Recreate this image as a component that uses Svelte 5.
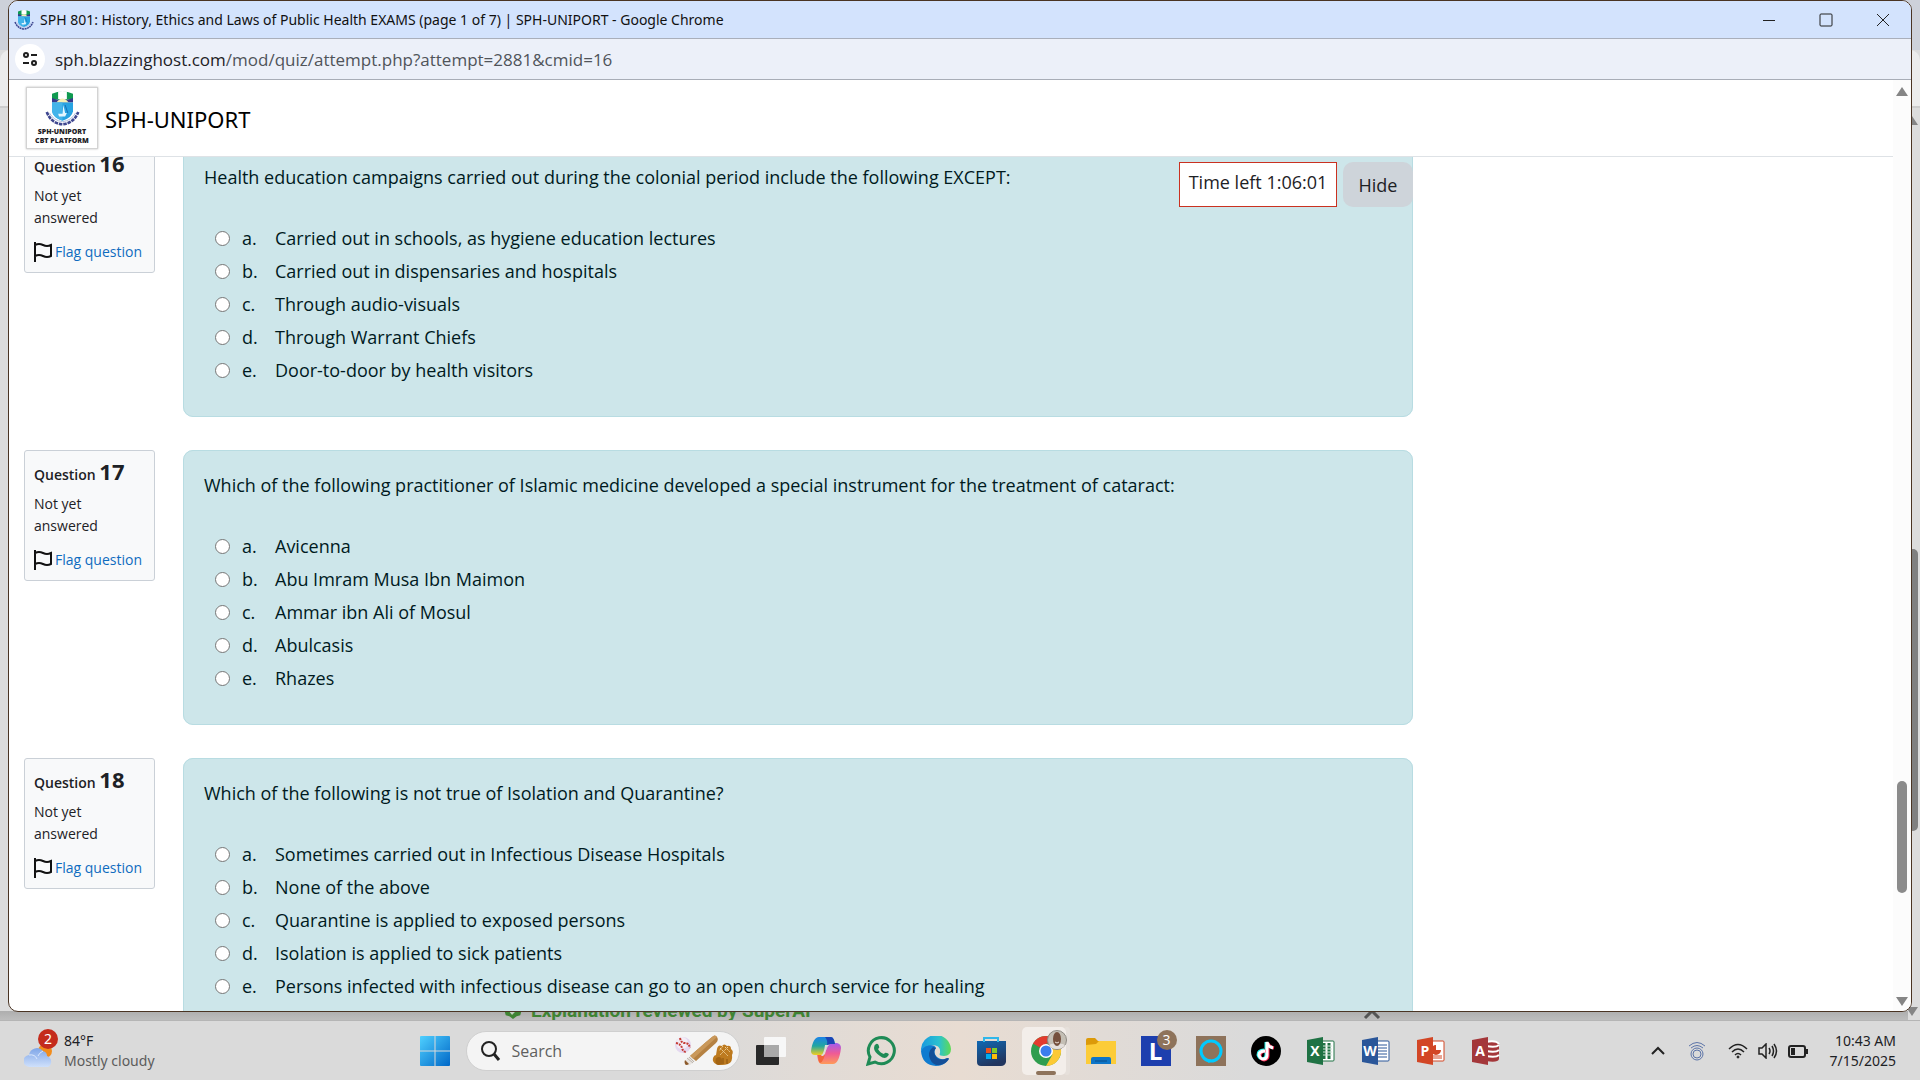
<script>
    let timeLeft = "1:06:01";
    let showTimer = true;
    let address = "sph.blazzinghost.com";
    let path = "/mod/quiz/attempt.php?attempt=2881&cmid=16";
    let search = "";
    const letters = ["a", "b", "c", "d", "e"];

    let questions = [
        {
            id: 16,
            text: "Health education campaigns carried out during the colonial period include the following EXCEPT:",
            answers: [
                "Carried out in schools, as hygiene education lectures",
                "Carried out in dispensaries and hospitals",
                "Through audio-visuals",
                "Through Warrant Chiefs",
                "Door-to-door by health visitors"
            ],
            picked: null
        },
        {
            id: 17,
            text: "Which of the following practitioner of Islamic medicine developed a special instrument for the treatment of cataract:",
            answers: ["Avicenna", "Abu Imram Musa Ibn Maimon", "Ammar ibn Ali of Mosul", "Abulcasis", "Rhazes"],
            picked: null
        },
        {
            id: 18,
            text: "Which of the following is not true of Isolation and Quarantine?",
            answers: [
                "Sometimes carried out in Infectious Disease Hospitals",
                "None of the above",
                "Quarantine is applied to exposed persons",
                "Isolation is applied to sick patients",
                "Persons infected with infectious disease can go to an open church service for healing"
            ],
            picked: null
        }
    ];

    const officeApps = [
        { name: "Excel", letter: "X", color: "#1f7244" },
        { name: "Word", letter: "W", color: "#2a5699" },
        { name: "PowerPoint", letter: "P", color: "#d24625" },
        { name: "Access", letter: "A", color: "#a4373a" }
    ];
</script>

{#snippet crest()}
    <svg class="crest" viewBox="0 0 40 40" aria-hidden="true">
        <path d="M8 3Q20-2 32 3V10H8Z" fill="#0f9a50" />
        <path d="M15 0.500Q20-0.500 25 0.500V9H15Z" fill="#fff" />
        <path d="M8 8L14 10H26L32 8V13H8Z" fill="#37398c" />
        <path d="M13 13Q20 4 27 13Z" fill="#f5efb4" />
        <path d="M8 13H32V23Q31 30 20 34Q9 30 8 23Z" fill="#27a3e2" />
        <path d="M8 13H20V34Q9 30 8 23Z" fill="#43b4ea" />
        <path d="M21 16L23 25H25L23 29H16L15 26H20Z" fill="#e2f6ff" />
        <path d="M23 16L26 25" fill="none" stroke="#1268b0" stroke-width="1" />
        <path d="M2 24Q7 37 20 38Q33 37 38 24" fill="none" stroke="#3f4790" stroke-width="3" stroke-dasharray="4 1" />
        <path d="M5 25Q10 34 20 35Q30 34 35 25" fill="none" stroke="#9fb3d8" stroke-width="1" />
    </svg>
{/snippet}

<div id="desktop">
    <div id="behind">
        <div class="behind-tabs"></div>
        <div class="behind-bar"></div>
        <div class="behind-page">
            <i class="arrow up"></i>
            <div class="behind-thumb"></div>
            <i class="arrow down"></i>
        </div>
        <div class="behind-foot">
            <div class="review">
                <svg width="20" height="22" viewBox="0 0 22 22" aria-hidden="true">
                    <path d="M11 0L14 2L18 2L19 6L22 10L20 14L19 18L15 19L11 22L7 19L3 18L2 14L0 10L3 6L4 2L8 2Z" fill="#3f8434" />
                    <path d="M6 11L10 16L16 10" fill="none" stroke="#c4cfc1" stroke-width="2" />
                </svg>
                <span>Explanation reviewed by SuperAI</span>
            </div>
            <svg class="fold" width="18" height="10" viewBox="0 0 18 10" aria-hidden="true"><path d="M2 8L9 1L16 8" fill="none" stroke="#555" stroke-width="3" /></svg>
        </div>
    </div>

    <div id="window">
        <header id="titlebar">
            <span class="favicon">{@render crest()}</span>
            <span class="title">SPH 801: History, Ethics and Laws of Public Health EXAMS (page 1 of 7) | SPH-UNIPORT - Google Chrome</span>
            <button aria-label="Minimize"><svg width="14" height="14" viewBox="0 0 14 14"><path d="M1 7.5H13" /></svg></button>
            <button aria-label="Maximize"><svg width="14" height="14" viewBox="0 0 14 14"><rect x="1" y="1" width="12" height="12" rx="1" /></svg></button>
            <button aria-label="Close"><svg width="14" height="14" viewBox="0 0 14 14"><path d="M1 1L13 13M13 1L1 13" /></svg></button>
        </header>

        <div id="address">
            <button class="site-info" aria-label="View site information">
                <svg width="18" height="18" viewBox="0 0 18 18" fill="none" stroke="#1f1f1f" stroke-width="2">
                    <circle cx="5" cy="5" r="2" /><path d="M10 5H16M2 13H8" /><circle cx="13" cy="13" r="2" />
                </svg>
            </button>
            <p>{address}<span>{path}</span></p>
        </div>

        <div id="view">
            <div id="page">
                <nav>
                    <a href="#home" class="logo">
                        {@render crest()}
                        <b>SPH-UNIPORT</b>
                        <b>CBT PLATFORM</b>
                    </a>
                    <a href="#home" class="brand">SPH-UNIPORT</a>
                </nav>

                <main>
                    <div class="timer">
                        {#if showTimer}
                            <div class="time">Time left {timeLeft}</div>
                        {/if}
                        <button on:click={() => (showTimer = !showTimer)}>{showTimer ? "Hide" : "Show"}</button>
                    </div>

                    {#each questions as q (q.id)}
                        <section class="question">
                            <div class="info">
                                <h3>Question <span>{q.id}</span></h3>
                                <p>Not yet answered</p>
                                <a href="#flag">
                                    <svg width="18" height="20" viewBox="0 0 18 20" aria-hidden="true"><path d="M1 0V20M1 3Q5 1 9 3T17 3V14Q13 16 9 14T1 14" /></svg>Flag question
                                </a>
                            </div>
                            <fieldset class="content">
                                <legend>{q.text}</legend>
                                {#each q.answers as answer, i}
                                    <label>
                                        <input type="radio" name="q{q.id}" value={i} bind:group={q.picked}>
                                        <span class="letter">{letters[i]}.</span>
                                        <span>{answer}</span>
                                    </label>
                                {/each}
                            </fieldset>
                        </section>
                    {/each}
                </main>
            </div>
            <div id="scrollbar">
                <i class="arrow up"></i>
                <div class="thumb"></div>
                <i class="arrow down"></i>
            </div>
        </div>
    </div>

    <footer id="taskbar">
        <button class="weather">
            <span class="weather-icon">
                <svg width="32" height="26" viewBox="0 0 32 26" aria-hidden="true">
                    <defs><linearGradient id="cloud" x2="0" y2="1"><stop offset="0" stop-color="#7fa6e8" /><stop offset="1" stop-color="#cfe0fb" /></linearGradient></defs>
                    <circle cx="21" cy="8" r="7" fill="#f28c1c" />
                    <path d="M6 24A6 6 0 0 1 5 12A8 8 0 0 1 19 8Q23 9 23 13A6 6 0 0 1 24 24Z" fill="url(#cloud)" />
                    <path d="M5 12Q11 11 13 16M19 8Q15 10 14 13" fill="none" stroke="#dbe8fd" stroke-width="1" />
                </svg>
                <b>2</b>
            </span>
            <span class="weather-text">84°F<small>Mostly cloudy</small></span>
        </button>

        <div class="apps">
            <button aria-label="Start">
                <svg width="30" height="30" viewBox="0 0 30 30">
                    <defs><linearGradient id="win" x2="1" y2="1"><stop offset="0" stop-color="#4fd0ff" /><stop offset="1" stop-color="#0067c7" /></linearGradient></defs>
                    <path d="M1 0H14.500V14.500H0V1Q0 0 1 0ZM15.500 0H29Q30 0 30 1V14.500H15.500ZM0 15.500H14.500V30H1Q0 30 0 29ZM15.500 15.500H30V29Q30 30 29 30H15.500Z" fill="url(#win)" />
                </svg>
            </button>
            <label class="search">
                <svg width="20" height="20" viewBox="0 0 20 20" fill="none" stroke="#222" stroke-width="2"><circle cx="8" cy="8" r="7" /><path d="M13 13L18 19" stroke-width="3" /></svg>
                <input type="text" placeholder="Search" aria-label="Search" bind:value={search}>
                <svg width="60" height="32" viewBox="0 0 60 32" aria-hidden="true">
                    <circle cx="9" cy="10" r="8" fill="#e4d8f0" />
                    <circle cx="8" cy="8" r="6" fill="#f3ecf4" />
                    <path d="M6 3Q7 8 11 8T16 13M2 8Q7 9 8 13T12 17" fill="none" stroke="#c43b34" stroke-width="2" stroke-dasharray="2 1" />
                    <path d="M38 2Q41-1 43 2Q45 5 42 8L22 26L16 21L32 7Z" fill="#b58142" />
                    <path d="M38 2Q41-1 43 2L19 24L16 21L32 7Z" fill="#c9985a" />
                    <path d="M11 26L16 21L21 26L16 30Q11 31 11 26Z" fill="#e8e4e0" />
                    <path d="M13 23L19 28M15 22L20 27" stroke="#bcb5ad" stroke-width="1" />
                    <path d="M11 25L15 29Q12 31 11 29Q10 27 11 25Z" fill="#8c5a2b" />
                    <path d="M43 14Q44 9 48 11Q50 8 53 11Q57 10 57 14Q60 16 58 20Q59 27 54 29Q48 31 42 29Q38 27 39 23Q40 20 42 20Z" fill="#bd7a1f" />
                    <path d="M46 13L54 21M51 12L56 17M54 12L46 20M49 11L45 16" stroke="#f0d19b" stroke-width="1" stroke-dasharray="2 1" />
                    <path d="M42 29Q40 22 45 22Q49 22 48 29Q44 31 42 29Z" fill="#a36413" />
                    <path d="M49 29V23M53 29V24" fill="none" stroke="#8b540f" stroke-width="1" />
                </svg>
            </label>
            <button aria-label="Task View">
                <svg width="30" height="30" viewBox="0 0 30 30">
                    <rect x="0" y="9" width="23" height="20" rx="1" fill="#292929" />
                    <rect x="8" y="1" width="22" height="20" rx="1" fill="#f7f7f7" />
                    <rect x="8" y="9" width="15" height="12" fill="#a9a9a9" />
                </svg>
            </button>
            <button aria-label="Copilot">
                <svg width="30" height="30" viewBox="0 0 30 30">
                    <defs>
                        <linearGradient id="cop1" x2="0" y2="1"><stop offset="0" stop-color="#1c83e8" /><stop offset="0.500" stop-color="#22a6a0" /><stop offset="1" stop-color="#f2cf1f" /></linearGradient>
                        <linearGradient id="cop2" x2="0" y2="1"><stop offset="0" stop-color="#a05cf0" /><stop offset="0.500" stop-color="#ef5b95" /><stop offset="1" stop-color="#ff9a58" /></linearGradient>
                    </defs>
                    <path d="M22 28H11Q8 28 7 24L6 19H11Q13 19 14 16L17 10Q18 7 21 7H26Q30 8 30 12Q28 28 22 28Z" fill="url(#cop2)" />
                    <path d="M7 19H11Q13 19 14 16L15 13Q13 26 9 27Q7 25 7 19Z" fill="#f2673c" />
                    <path d="M8 1H20Q22 1 23 4L24 8H19Q17 8 16 11L13 17Q12 19 9 19H4Q0 19 0 15Q2 1 8 1Z" fill="url(#cop1)" />
                    <path d="M14 1H20Q22 1 23 4L24 8H19Q17 8 16 10Q17 4 14 1Z" fill="#1b45b5" />
                    <path d="M14 9H18L16 11L14 18L12 20H10Q13 17 14 9Z" fill="#dedbda" />
                </svg>
            </button>
            <button aria-label="WhatsApp">
                <svg width="30" height="30" viewBox="0 0 30 30">
                    <path d="M2 28L4 21A13 13 0 1 1 9 26Z" fill="none" stroke="#1f8b56" stroke-width="3" />
                    <path d="M10 8Q12 7 13 10Q14 12 12 13Q14 17 18 18Q19 16 21 17Q24 18 22 20Q19 24 14 20Q8 16 8 12Q8 9 10 8Z" fill="#1f8b56" />
                </svg>
            </button>
            <button aria-label="Edge">
                <svg width="30" height="30" viewBox="0 0 30 30">
                    <defs>
                        <linearGradient id="edge1"><stop offset="0" stop-color="#1798e0" /><stop offset="0.600" stop-color="#2bc2cf" /><stop offset="1" stop-color="#5fdb52" /></linearGradient>
                    </defs>
                    <path d="M0 15Q1 8 9 9Q14 9 15 12Q12 16 15 20Q19 25 28 22Q24 30 15 30Q1 29 0 15Z" fill="#0f7bd0" />
                    <path d="M0 15A15 15 0 0 1 30 13Q30 20 23 20Q17 20 19 17Q20 9 11 9Q3 9 0 15Z" fill="url(#edge1)" />
                    <path d="M12 11Q6 16 9 23Q12 30 19 29Q25 28 28 23Q27 21 24 23Q17 25 14 19Q12 15 15 12Z" fill="#144f98" />
                </svg>
            </button>
            <button aria-label="Microsoft Store">
                <svg width="30" height="30" viewBox="0 0 30 30">
                    <defs><linearGradient id="store" x2="0.400" y2="1"><stop offset="0" stop-color="#0f68b3" /><stop offset="1" stop-color="#22365f" /></linearGradient></defs>
                    <path d="M1 5H30V26Q29 30 25 30H5Q1 30 1 26Z" fill="url(#store)" />
                    <path d="M8 6V2H22V6" fill="none" stroke="#30b7ea" stroke-width="2" />
                    <path d="M10 12H15V17H10Z" fill="#f1511b" /><path d="M16 12H21V17H16Z" fill="#80cc28" />
                    <path d="M10 18H15V23H10Z" fill="#00adef" /><path d="M16 18H21V23H16Z" fill="#fbbc09" />
                </svg>
            </button>
            <button class="active" aria-label="Google Chrome">
                <svg width="48" height="48" viewBox="0 0 48 48">
                    <rect x="42" y="0" width="6" height="48" rx="4" fill="#e6e0db" />
                    <rect x="0" y="0" width="44" height="48" rx="5" fill="#f3eeea" />
                    <circle cx="24" cy="24" r="15" fill="#2f9d4e" />
                    <path d="M24 24L11 16.500A15 15 0 0 1 37 16.500H24Z" fill="#e33b2e" />
                    <path d="M24 24L30.500 16.500H37A15 15 0 0 1 24 39L30.500 27.500Z" fill="#fcc934" />
                    <circle cx="24" cy="24" r="7" fill="#fff" /><circle cx="24" cy="24" r="5.500" fill="#3b7ded" />
                    <circle cx="35" cy="13" r="9.500" fill="#c4bfb5" stroke="#8e8a84" />
                    <path d="M27 18Q30 16 35 17Q40 16 43 18Q41 22 35 22Q29 22 27 18Z" fill="#e4dfdb" />
                    <ellipse cx="35" cy="12" rx="4" ry="7" fill="#75503d" /><path d="M33 15Q35 17 37 15" fill="none" stroke="#ece2da" />
                    <rect x="14" y="44" width="20" height="4" rx="2" fill="#8e735b" />
                </svg>
            </button>
            <button aria-label="File Explorer">
                <svg width="30" height="30" viewBox="0 0 30 30">
                    <path d="M0 4Q0 2 2 2H9L12 5H28V12H0Z" fill="#dc9a09" />
                    <path d="M0 9L10 8L13 5H30V28H0Z" fill="#fccc38" />
                    <path d="M5 28V23Q5 21 7 21H23Q25 21 25 23V28Z" fill="#0d75c8" /><path d="M9 25H21" stroke="#0a4c88" stroke-width="1" />
                </svg>
            </button>
            <button class="square blue" aria-label="L, 3 notifications"><strong>L</strong><span class="badge">3</span></button>
            <button class="square brown" aria-label="Alexa">
                <svg width="24" height="24" viewBox="0 0 24 24"><circle cx="12" cy="12" r="10" fill="none" stroke="#00caff" stroke-width="3" /><path d="M11 20L9 24L14 22Z" fill="#00caff" /></svg>
            </button>
            <button aria-label="TikTok">
                <svg width="30" height="30" viewBox="0 0 30 30">
                    <circle cx="15" cy="15" r="15" fill="#000" />
                    <g fill="none" stroke-width="3">
                        <path d="M13 14Q7 14 7 19Q8 23 12 23Q15 22 15 19V6Q16 10 21 11" stroke="#25f4ee" />
                        <path d="M15 15Q9 15 9 20Q10 24 13 24Q17 23 17 20V7Q18 11 23 12" stroke="#fe2c55" />
                        <path d="M14 15Q8 15 8 19Q9 23 12 23Q16 23 16 19V6Q17 11 22 12" stroke="#fff" />
                    </g>
                </svg>
            </button>
            {#each officeApps as app}
                <button aria-label={app.name}>
                    <svg width="30" height="28" viewBox="0 0 30 28">
                        {#if app.name === "Access"}
                            <path d="M15 5Q27 2 28 7V22Q27 26 15 24Z" fill={app.color} />
                            <path d="M15 9Q25 11 28 8M15 14Q25 16 28 13M15 19Q25 21 28 18M15 5Q25 3 28 7" fill="none" stroke="#fff" stroke-width="2" />
                        {:else}
                            <rect x="15" y="4" width="13" height="20" rx="1" fill="#fff" stroke={app.color} />
                        {/if}
                        {#if app.name === "Excel"}
                            <path d="M18 6V22M23 6V22" stroke={app.color} stroke-width="3" /><path d="M17 9H26M17 12H26M17 15H26M17 18H26" stroke="#d4e5da" />
                        {:else if app.name === "Word"}
                            <path d="M17 8H26M17 11H26M17 14H26M17 17H26M17 20H26" stroke={app.color} />
                        {:else if app.name === "PowerPoint"}
                            <path d="M20 8V13H25A5 5 0 1 1 20 8Z" fill={app.color} /><path d="M17 19H26M17 21H26" stroke={app.color} />
                        {/if}
                        <path d="M1 3L17 0V28L1 25Z" fill={app.color} />
                        <text x="9" y="19" text-anchor="middle">{app.letter}</text>
                    </svg>
                </button>
            {/each}
        </div>

        <div class="tray">
            <button aria-label="Show hidden icons"><svg width="16" height="16" viewBox="0 0 16 16"><path d="M2 11L8 5L14 11" stroke-width="2" /></svg></button>
            <button aria-label="Hotspot"><svg width="18" height="20" viewBox="0 0 18 20" class="pale"><circle cx="9" cy="13" r="6" /><circle cx="9" cy="13" r="4" /><path d="M1 5Q9-2 17 5M3 7Q9 2 15 7" /></svg></button>
            <button class="status" aria-label="Network, volume and battery">
                <svg width="20" height="16" viewBox="0 0 20 16"><path d="M1 6Q10-3 19 6M4 9Q10 3 16 9M7 12Q10 9 13 12" stroke-width="1.500" /><circle cx="10" cy="14" r="1" fill="#222" /></svg>
                <svg width="20" height="16" viewBox="0 0 20 16"><path d="M1 5H4L8 1V15L4 11H1ZM11 5Q13 8 11 11M14 3Q17 8 14 13M16 1Q21 8 16 15" stroke-width="1.500" /></svg>
                <svg width="20" height="16" viewBox="0 0 20 16"><rect x="1" y="3" width="16" height="11" rx="2" stroke-width="2" /><rect x="3" y="5" width="4" height="7" fill="#222" stroke="none" /><path d="M19 6V11" stroke-width="2" /></svg>
            </button>
            <button class="clock"><span>10:43 AM</span><span>7/15/2025</span></button>
        </div>
    </footer>
</div>

<style>
:global(body){
    overflow: hidden;
}
#desktop{
    position: relative;
    display: flex;
    flex-direction: column;
    height: 100vh;
    box-sizing: border-box;
    font-family: "Open Sans", "Noto Sans", sans-serif;
    color: #1d2125;
    background: #dcdcdc;
}
button{
    border: 0;
    padding: 0;
    background: none;
    font: inherit;
    color: inherit;
}
a{
    text-decoration: none;
    color: inherit;
}
svg{
    display: block;
    flex: none;
}

/* the browser window under the popup */
#behind{
    position: absolute;
    inset: 0 0 60px 0;
    display: flex;
    flex-direction: column;
    background: #dcdcdc;
}
.behind-tabs{
    height: 50px;
    background: #cdd1da;
}
.behind-bar{
    height: 56px;
    border-bottom: 2px solid #cdcdcd;
    background: #ececec;
    border-radius: 10px 10px 0 0;
}
.behind-page{
    flex: 1;
    display: flex;
    flex-direction: column;
    align-items: flex-end;
    padding: 8px 2px 4px 0;
}
.behind-thumb{
    width: 10px;
    height: 282px;
    margin-top: 424px;
    margin-bottom: auto;
    border-radius: 5px;
    background: #808080;
}
.behind-foot{
    position: absolute;
    left: 0;
    right: 12px;
    bottom: 0;
    height: 9px;
    overflow: hidden;
    display: flex;
    align-items: flex-end;
    background: linear-gradient(#aeaeae, #bdbdbd);
}
.review{
    display: flex;
    align-items: flex-end;
    gap: 8px;
    margin-left: 503px;
    font: 700 19px/18px Roboto, sans-serif;
    color: #3f8434;
}
.fold{
    margin-left: 552px;
}

#window{
    position: relative;
    flex: 1;
    min-height: 0;
    margin: 0 8px 8px 8px;
    display: flex;
    flex-direction: column;
    overflow: hidden;
    border: 1px solid #4a3423;
    border-radius: 10px;
    background: #fff;
}
#titlebar{
    display: flex;
    align-items: center;
    height: 37px;
    padding-left: 5px;
    border-bottom: 1px solid #a9afbb;
    background: #d3e3fd;
    color: #111;
    font-family: "Noto Sans", sans-serif;
    font-size: 14px;
}
.favicon{
    width: 20px;
    margin-right: 6px;
}
.title{
    flex: 1;
}
#titlebar button{
    width: 57px;
    display: flex;
    justify-content: center;
}
#titlebar button svg{
    fill: none;
    stroke: #222;
}
#address{
    display: flex;
    align-items: center;
    gap: 10px;
    height: 40px;
    padding-left: 6px;
    border-bottom: 1px solid #a8adb7;
    background: #ecf0f9;
    font-size: 17px;
}
#address p{
    margin: 0;
}
#address p span{
    color: #50545a;
}
.site-info{
    display: flex;
    align-items: center;
    justify-content: center;
    width: 30px;
    height: 30px;
    border-radius: 50%;
    background: #fff;
}

#view{
    flex: 1;
    min-height: 0;
    display: flex;
}
#page{
    flex: 1;
    min-width: 0;
    display: flex;
    flex-direction: column;
    overflow: hidden;
}
nav{
    display: flex;
    align-items: center;
    gap: 7px;
    flex: none;
    height: 76px;
    padding-left: 17px;
    border-bottom: 1px solid #dee2e6;
    background: #fff;
}
.logo{
    display: flex;
    flex-direction: column;
    align-items: center;
    width: 70px;
    height: 60px;
    border: 1px solid #d3d3d3;
    box-shadow: 0 0 2px #bbb;
    font: 700 7px/9px "Open Sans", sans-serif;
}
.logo .crest{
    width: 35px;
    margin-top: 3px;
    margin-bottom: 1px;
}
.brand{
    padding-top: 2px;
    font-family: "Noto Sans", sans-serif;
    font-size: 22px;
    color: #000;
}

main{
    position: relative;
    flex: 1;
    min-height: 0;
    overflow: hidden;
    padding: 0 480px 0 15px;
}
.timer{
    position: absolute;
    top: 5px;
    right: 480px;
    display: flex;
    gap: 6px;
    font-size: 18px;
}
.time{
    box-sizing: border-box;
    width: 158px;
    height: 45px;
    border: 1px solid #ca3120;
    background: #fff;
    text-align: center;
    line-height: 39px;
}
.timer button{
    width: 70px;
    height: 45px;
    border-radius: 10px;
    background: #ced4da;
    color: #1d2125;
}
.question{
    display: flex;
    gap: 28px;
    margin-bottom: 33px;
}
.question:nth-of-type(1){
    margin-top: -15px;
}
.info{
    flex: none;
    align-self: flex-start;
    box-sizing: border-box;
    width: 131px;
    height: 131px;
    padding: 6px 9px;
    border: 1px solid #cad0d7;
    border-radius: 3px;
    background: #f8f9fa;
    font-size: 14px;
    line-height: 22px;
}
.info h3{
    margin: 0 0 4px 0;
    font-size: 14px;
    font-weight: 600;
    line-height: 28px;
}
.info h3 span{
    font-size: 22px;
    font-weight: 700;
}
.info p{
    margin: 0 0 12px 0;
    width: 80px;
}
.info a{
    display: flex;
    align-items: center;
    gap: 3px;
    color: #0f6cbf;
    white-space: nowrap;
}
.info a svg{
    fill: none;
    stroke: #111;
    stroke-width: 2;
}
.content{
    flex: 1;
    min-width: 0;
    box-sizing: border-box;
    height: 275px;
    margin: 0;
    padding: 20px;
    border: 1px solid #b8dce2;
    border-radius: 10px;
    background: #cde6ea;
    color: #001a1e;
    font-size: 18px;
    line-height: 28px;
}
.content legend{
    float: left;
    width: 100%;
    padding: 0;
    margin-bottom: 33px;
}
.content label{
    clear: both;
    display: flex;
    align-items: center;
    height: 28px;
    margin-bottom: 5px;
}
.content input{
    appearance: none;
    box-sizing: border-box;
    width: 15px;
    height: 15px;
    margin: 0 12px 0 11px;
    border: 1px solid #767676;
    border-radius: 50%;
    background: #fff;
}
.content input:checked{
    border: 5px solid #0f6cbf;
}
.letter{
    width: 33px;
}

#scrollbar{
    display: flex;
    flex-direction: column;
    align-items: center;
    width: 18px;
    padding: 7px 0 5px 0;
    box-sizing: border-box;
    background: #fcfcfc;
}
.arrow{
    border: 6px solid transparent;
}
.arrow.up{
    border-top: 0;
    border-bottom: 9px solid #858585;
}
.arrow.down{
    border-bottom: 0;
    border-top: 9px solid #858585;
}
#scrollbar .thumb{
    width: 10px;
    height: 112px;
    margin-top: 685px;
    margin-bottom: auto;
    border-radius: 5px;
    background: #8b8b8b;
}

#taskbar{
    position: relative;
    display: grid;
    grid-template-columns: 1fr auto 1fr;
    align-items: center;
    height: 60px;
    box-sizing: border-box;
    border-top: 1px solid #b5b5b5;
    background: linear-gradient(90deg, #dadada 35%, #e8dcd2 50%, #dadada 65%);
}
.weather{
    justify-self: start;
    display: flex;
    gap: 8px;
    margin-left: 24px;
    text-align: left;
    font: 14px/20px "Noto Sans", sans-serif;
}
.weather-icon{
    position: relative;
    padding-top: 12px;
}
.weather-icon b{
    position: absolute;
    top: -2px;
    left: 14px;
    width: 20px;
    height: 20px;
    border-radius: 50%;
    background: #c42b1c;
    color: #fff;
    text-align: center;
    font-weight: 400;
}
.weather-text small{
    display: block;
    font-size: 14px;
    color: #5c5c5c;
}
.apps{
    display: flex;
    align-items: center;
    gap: 7px;
}
.apps button{
    width: 48px;
    height: 48px;
    display: flex;
    align-items: center;
    justify-content: center;
}
.search{
    display: flex;
    align-items: center;
    box-sizing: border-box;
    width: 274px;
    height: 40px;
    padding: 0 5px 0 14px;
    border: 1px solid #cfcfcf;
    border-radius: 20px;
    background: #f4f4f4;
}
.search input{
    flex: 1;
    min-width: 0;
    border: 0;
    padding: 0 0 0 11px;
    background: none;
    font: 16px "Open Sans", sans-serif;
}
.search input::placeholder{
    color: #5f5f5f;
}
.apps .square{
    position: relative;
    width: 30px;
    height: 30px;
    margin: 0 9px;
}
.blue{
    background: #1d3fae;
    color: #fff;
}
.blue strong{
    font-size: 24px;
}
.brown{
    background: #8e735b;
}
.badge{
    position: absolute;
    top: -6px;
    right: -6px;
    width: 20px;
    border-radius: 50%;
    background: #8e735b;
    font-size: 14px;
    line-height: 20px;
}
.apps text{
    fill: #fff;
    font: 700 14px "Open Sans", sans-serif;
}
.tray{
    justify-self: end;
    display: flex;
    align-items: center;
    gap: 22px;
    margin-right: 24px;
    font: 14px/20px "Noto Sans", sans-serif;
}
.tray svg{
    fill: none;
    stroke: #222;
}
.tray .pale{
    stroke: #5c74a8;
}
.status{
    display: flex;
    gap: 10px;
}
.clock span{
    display: block;
    text-align: right;
}
</style>
